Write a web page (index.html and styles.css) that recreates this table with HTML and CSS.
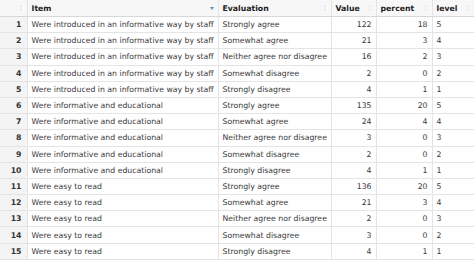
FILE: index.html
```html
<!DOCTYPE html>
<html>
<head>
<meta charset="utf-8">
<link rel="stylesheet" href="styles.css">
</head>
<body>
<table class="grid">
<colgroup>
<col class="c-num"><col class="c-item"><col class="c-eval"><col class="c-val"><col class="c-pct"><col class="c-lvl">
</colgroup>
<thead>
<tr>
<th class="rn"><span class="sort"></span></th>
<th>Item<span class="sort active"></span></th>
<th>Evaluation<span class="sort"></span></th>
<th>Value<span class="sort"></span></th>
<th>percent<span class="sort"></span></th>
<th>level<span class="sort"></span></th>
</tr>
</thead>
<tbody>
<tr><td class="rn">1</td><td>Were introduced in an informative way by staff</td><td>Strongly agree</td><td class="num">122</td><td class="num">18</td><td>5</td></tr>
<tr><td class="rn">2</td><td>Were introduced in an informative way by staff</td><td>Somewhat agree</td><td class="num">21</td><td class="num">3</td><td>4</td></tr>
<tr><td class="rn">3</td><td>Were introduced in an informative way by staff</td><td>Neither agree nor disagree</td><td class="num">16</td><td class="num">2</td><td>3</td></tr>
<tr><td class="rn">4</td><td>Were introduced in an informative way by staff</td><td>Somewhat disagree</td><td class="num">2</td><td class="num">0</td><td>2</td></tr>
<tr><td class="rn">5</td><td>Were introduced in an informative way by staff</td><td>Strongly disagree</td><td class="num">4</td><td class="num">1</td><td>1</td></tr>
<tr><td class="rn">6</td><td>Were informative and educational</td><td>Strongly agree</td><td class="num">135</td><td class="num">20</td><td>5</td></tr>
<tr><td class="rn">7</td><td>Were informative and educational</td><td>Somewhat agree</td><td class="num">24</td><td class="num">4</td><td>4</td></tr>
<tr><td class="rn">8</td><td>Were informative and educational</td><td>Neither agree nor disagree</td><td class="num">3</td><td class="num">0</td><td>3</td></tr>
<tr><td class="rn">9</td><td>Were informative and educational</td><td>Somewhat disagree</td><td class="num">2</td><td class="num">0</td><td>2</td></tr>
<tr><td class="rn">10</td><td>Were informative and educational</td><td>Strongly disagree</td><td class="num">4</td><td class="num">1</td><td>1</td></tr>
<tr><td class="rn">11</td><td>Were easy to read</td><td>Strongly agree</td><td class="num">136</td><td class="num">20</td><td>5</td></tr>
<tr><td class="rn">12</td><td>Were easy to read</td><td>Somewhat agree</td><td class="num">21</td><td class="num">3</td><td>4</td></tr>
<tr><td class="rn">13</td><td>Were easy to read</td><td>Neither agree nor disagree</td><td class="num">2</td><td class="num">0</td><td>3</td></tr>
<tr><td class="rn">14</td><td>Were easy to read</td><td>Somewhat disagree</td><td class="num">3</td><td class="num">0</td><td>2</td></tr>
<tr><td class="rn">15</td><td>Were easy to read</td><td>Strongly disagree</td><td class="num">4</td><td class="num">1</td><td>1</td></tr>
</tbody>
</table>
</body>
</html>
```
FILE: styles.css
```css
html, body {
  margin: 0;
  padding: 0;
  background: #ffffff;
}
.grid {
  border-collapse: collapse;
  table-layout: fixed;
  width: 474px;
  font-family: "DejaVu Sans", sans-serif;
  font-size: 7.75px;
  color: #3a3a3a;
}
.c-num { width: 27px; }
.c-item { width: 191px; }
.c-eval { width: 113px; }
.c-val { width: 45px; }
.c-pct { width: 56px; }
.c-lvl { width: 42px; }
.grid th, .grid td {
  border: 1px solid #e4e4e4;
  padding: 0 4px;
  white-space: nowrap;
  overflow: hidden;
  text-align: left;
}
.grid tr > :first-child { border-left: none; }
.grid tr > :last-child { border-right: none; }
.grid thead th {
  height: 16px;
  background: #f7f7f7;
  font-weight: bold;
  color: #222;
  position: relative;
  border-top: none;
  border-bottom: 1px solid #d8d8d8;
}
.grid tbody td {
  height: 15.2px;
}
.grid td.rn {
  background: #f4f4f4;
  text-align: right;
  font-weight: bold;
  color: #333;
  padding-right: 5px;
}
.grid td.num { text-align: right; }
.sort {
  position: absolute;
  right: 4px;
  top: 5px;
  width: 3px;
  height: 6px;
}
.sort::before, .sort::after {
  content: "";
  position: absolute;
  left: 0;
  border-left: 1.5px solid transparent;
  border-right: 1.5px solid transparent;
}
.sort::before {
  top: 0;
  border-bottom: 2px solid #dcdcdc;
}
.sort::after {
  bottom: 0;
  border-top: 2px solid #dcdcdc;
}
.sort.active::before { display: none; }
.sort.active::after {
  bottom: 1px;
  left: -1px;
  border-left-width: 2.5px;
  border-right-width: 2.5px;
  border-top: 3px solid #5c8fc7;
}
```
